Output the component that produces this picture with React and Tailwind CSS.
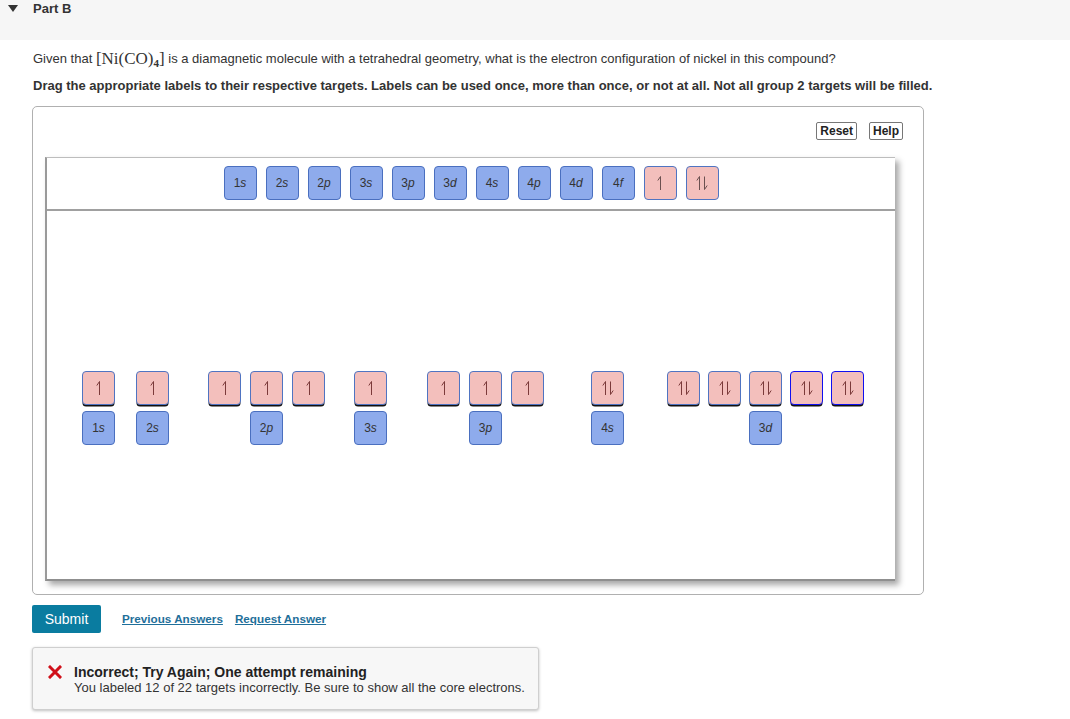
import React from "react";

const font = { fontFamily: '"Liberation Sans", Arial, sans-serif' };

function Up({ color = "#8a3b3b" }) {
  return (
    <svg width="6" height="16" viewBox="0 0 6 16" className="block">
      <path d="M3.5 1.5 V15 M3.5 1.5 L0.8 5.5" stroke={color} strokeWidth="1" fill="none" />
    </svg>
  );
}

function Down({ color = "#8a3b3b" }) {
  return (
    <svg width="6" height="16" viewBox="0 0 6 16" className="block">
      <path d="M2.5 1.5 V14.5 M2.5 14.5 L5.2 10.5" stroke={color} strokeWidth="1" fill="none" />
    </svg>
  );
}

function Spin({ pair, color }) {
  return (
    <div className="flex items-center">
      <Up color={color} />
      {pair && <Down color={color} />}
    </div>
  );
}

function Orbital({ n, l }) {
  return (
    <span className="text-[12px] text-[#333]">
      {n}
      <i className="font-normal">{l}</i>
    </span>
  );
}

function LabelBox({ children, pink }) {
  return (
    <div
      className={
        "w-[33px] h-[34px] rounded-[4px] border flex items-center justify-center " +
        (pink ? "bg-[#f3bfbc] border-[#4f74c2]" : "bg-[#8eabec] border-[#4a6fbf]")
      }
    >
      {children}
    </div>
  );
}

function Target({ pair, focus }) {
  return (
    <div
      className={
        "w-[33px] h-[34px] rounded-[4px] border bg-[#f3bfbc] flex items-center justify-center shadow-[0_2px_0_-0.5px_#111] " +
        (focus ? "border-[#1010f0]" : "border-[#4f74c2]")
      }
    >
      <Spin pair={pair} color="#7b3a3a" />
    </div>
  );
}

function Column({ pair, focus, label }) {
  return (
    <div className="flex flex-col gap-[6px] w-[33px]">
      <Target pair={pair} focus={focus} />
      {label ? (
        <LabelBox>
          <Orbital n={label[0]} l={label[1]} />
        </LabelBox>
      ) : (
        <div className="h-[34px]" />
      )}
    </div>
  );
}

export default function App() {
  const labels = [
    ["1", "s"], ["2", "s"], ["2", "p"], ["3", "s"], ["3", "p"], ["3", "d"],
    ["4", "s"], ["4", "p"], ["4", "d"], ["4", "f"],
  ];

  return (
    <div className="min-h-screen bg-white text-[#333]" style={font}>
      <div className="h-[40px] bg-[#f6f6f6] flex items-start">
        <svg width="10" height="7" viewBox="0 0 10 7" className="ml-[8px] mt-[5px]">
          <path d="M0 0 H10 L5 7 Z" fill="#333" />
        </svg>
        <span className="ml-[15px] mt-[1px] text-[13px] font-bold leading-[15px]">Part B</span>
      </div>

      <div className="pl-[33px] pr-[10px]">
        <p className="mt-[9px] text-[13px] leading-[20px] flex items-center">
          Given that&nbsp;
          <span className="text-[17px] leading-[20px]" style={{ fontFamily: '"Liberation Serif", serif' }}>
            [Ni(CO)<sub className="text-[11px] font-bold">4</sub>]
          </span>
          &nbsp;is a diamagnetic molecule with a tetrahedral geometry, what is the electron configuration of nickel in this compound?
        </p>
        <p className="mt-[9px] text-[13px] font-bold leading-[16px]">
          Drag the appropriate labels to their respective targets. Labels can be used once, more than once, or not at all. Not all group 2 targets will be filled.
        </p>
      </div>

      <div className="ml-[32px] mt-[12px] w-[892px] h-[489px] border border-[#b0b0b0] rounded-[5px] pt-[15px]">
        <div className="flex justify-end gap-[12px] pr-[20px]">
          <button className="h-[18px] px-[3px] border border-[#777] rounded-[2px] text-[12px] font-bold leading-[16px] bg-white text-[#222]">
            Reset
          </button>
          <button className="h-[18px] px-[3px] border border-[#777] rounded-[2px] text-[12px] font-bold leading-[16px] bg-white text-[#222]">
            Help
          </button>
        </div>

        <div className="ml-[12px] mt-[17px] w-[850px] h-[424px] border-t border-t-[#bdbdbd] border-l-2 border-l-[#9a9a9a] border-b-2 border-b-[#8f8f8f] bg-white shadow-[4px_4px_6px_rgba(0,0,0,0.35)] flex flex-col">
          <div className="h-[53px] border-b-2 border-[#a0a0a0] flex justify-center gap-[9px] pt-[8px]">
            {labels.map(([n, l]) => (
              <LabelBox key={n + l}>
                <Orbital n={n} l={l} />
              </LabelBox>
            ))}
            <LabelBox pink>
              <Spin color="#6b5050" />
            </LabelBox>
            <LabelBox pink>
              <Spin pair color="#6b5050" />
            </LabelBox>
          </div>

          <div className="flex pt-[160px] pl-[35px]">
            <Column label={["1", "s"]} />
            <div className="ml-[21px]">
              <Column label={["2", "s"]} />
            </div>
            <div className="ml-[39px] flex gap-[9px]">
              <Column />
              <Column label={["2", "p"]} />
              <Column />
            </div>
            <div className="ml-[29px]">
              <Column label={["3", "s"]} />
            </div>
            <div className="ml-[40px] flex gap-[9px]">
              <Column />
              <Column label={["3", "p"]} />
              <Column />
            </div>
            <div className="ml-[47px]">
              <Column pair label={["4", "s"]} />
            </div>
            <div className="ml-[43px] flex gap-[8px]">
              <Column pair />
              <Column pair />
              <Column pair label={["3", "d"]} />
              <Column pair focus />
              <Column pair focus />
            </div>
          </div>
        </div>
      </div>

      <div className="ml-[32px] mt-[10px] flex items-center">
        <button className="h-[28px] w-[69px] bg-[#0a7ca0] rounded-[2px] text-white text-[14px]">Submit</button>
        <a className="ml-[21px] text-[11.7px] font-bold text-[#1f6f9a] underline">Previous Answers</a>
        <a className="ml-[12px] text-[11.7px] font-bold text-[#1f6f9a] underline">Request Answer</a>
      </div>

      <div className="ml-[32px] mt-[14px] w-[507px] h-[63px] bg-[#f7f7f7] border border-[#cfcfcf] rounded-[3px] shadow-[0_1px_3px_rgba(0,0,0,0.25)] flex items-start pt-[16px] pl-[15px]">
        <svg width="14" height="14" viewBox="0 0 14 14" className="mt-[1px]">
          <path d="M2 2 L12 12 M12 2 L2 12" stroke="#d0101a" strokeWidth="3" strokeLinecap="square" />
        </svg>
        <div className="ml-[12px]">
          <div className="text-[14px] font-bold leading-[16px] text-[#222]">Incorrect; Try Again; One attempt remaining</div>
          <div className="text-[13px] leading-[15px] text-[#333]">
            You labeled 12 of 22 targets incorrectly. Be sure to show all the core electrons.
          </div>
        </div>
      </div>
    </div>
  );
}
